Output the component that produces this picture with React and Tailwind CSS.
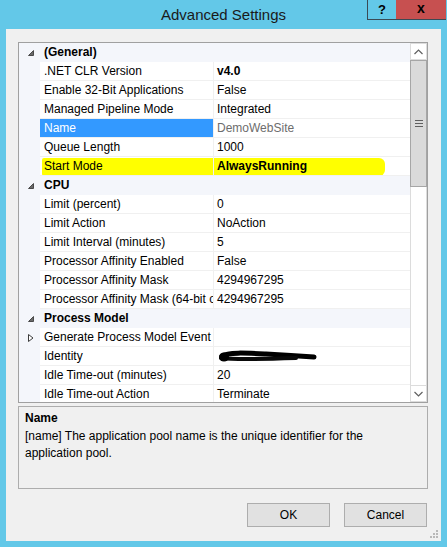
import React from 'react';

const rows = [
  { type: 'header', label: '(General)' },
  { label: '.NET CLR Version', value: 'v4.0', bold: true },
  { label: 'Enable 32-Bit Applications', value: 'False' },
  { label: 'Managed Pipeline Mode', value: 'Integrated' },
  { label: 'Name', value: 'DemoWebSite', selected: true },
  { label: 'Queue Length', value: '1000' },
  { label: 'Start Mode', value: 'AlwaysRunning', bold: true, marked: true },
  { type: 'header', label: 'CPU' },
  { label: 'Limit (percent)', value: '0' },
  { label: 'Limit Action', value: 'NoAction' },
  { label: 'Limit Interval (minutes)', value: '5' },
  { label: 'Processor Affinity Enabled', value: 'False' },
  { label: 'Processor Affinity Mask', value: '4294967295' },
  { label: 'Processor Affinity Mask (64-bit option)', value: '4294967295' },
  { type: 'header', label: 'Process Model' },
  { label: 'Generate Process Model Event Log Entry', value: '', collapsed: true },
  { label: 'Identity', value: '', scribble: true },
  { label: 'Idle Time-out (minutes)', value: '20' },
  { label: 'Idle Time-out Action', value: 'Terminate' },
];

const ExpandedIcon = () => (
  <svg width="6" height="6" viewBox="0 0 6 6">
    <polygon points="5.5,0.5 5.5,5.5 0.5,5.5" fill="#6a6a6a" stroke="#4a4a4a" strokeWidth="1" />
  </svg>
);

const CollapsedIcon = () => (
  <svg width="6" height="8" viewBox="0 0 6 8">
    <polygon points="0.5,0.5 5,4 0.5,7.5" fill="white" stroke="#3c3c3c" strokeWidth="1" />
  </svg>
);

// blacked-out identity value
const Scribble = () => (
  <svg width="104" height="16" viewBox="0 0 104 16" className="absolute left-[2px] top-[1px]">
    <path d="M6 8 C12 4, 30 5, 50 6 C70 7, 85 8, 98 9" stroke="#000" strokeWidth="5" fill="none" strokeLinecap="round" />
    <path d="M5 10 C20 12, 50 11, 80 10" stroke="#0a0a0a" strokeWidth="4" fill="none" strokeLinecap="round" />
    <ellipse cx="8" cy="9" rx="5" ry="4.5" fill="#000" />
  </svg>
);

const Row = ({ row }) => {
  if (row.type === 'header') {
    return (
      <div className="flex h-[19px] bg-[#f4f6fb]">
        <div className="w-[21px] flex items-center justify-end pr-[6px]">
          <ExpandedIcon />
        </div>
        <div className="pl-[4px] leading-[19px] font-bold">{row.label}</div>
      </div>
    );
  }
  return (
    <div className="flex h-[19px] relative">
      <div className="w-[21px] shrink-0 bg-[#f4f6fb] flex items-center justify-end pr-[6px]">
        {row.collapsed && <CollapsedIcon />}
      </div>
      {row.marked && (
        <div className="absolute left-[23px] top-[1px] w-[343px] h-[18px] bg-[#ffff00] rounded-r-[6px] rounded-l-[2px]" />
      )}
      <div
        className={
          'relative w-[174px] shrink-0 border-b border-r border-[#f0f0f0] pl-[4px] leading-[18px] whitespace-nowrap overflow-hidden ' +
          (row.selected ? 'bg-[#3399ff] text-white' : '')
        }
      >
        {row.label}
      </div>
      <div
        className={
          'relative flex-1 border-b border-[#f0f0f0] pl-[3px] leading-[18px] whitespace-nowrap overflow-hidden ' +
          (row.bold ? 'font-bold ' : '') +
          (row.selected ? 'text-[#6d6d6d]' : '')
        }
      >
        {row.value}
        {row.scribble && <Scribble />}
      </div>
    </div>
  );
};

const Scrollbar = () => (
  <div className="w-[17px] shrink-0 flex flex-col bg-white">
    <div className="h-[17px] border border-[#dcdcdc] flex items-center justify-center">
      <svg width="9" height="6" viewBox="0 0 9 6">
        <polyline points="0.5,5 4.5,1 8.5,5" fill="none" stroke="#606060" strokeWidth="1.2" />
      </svg>
    </div>
    <div className="h-[127px] bg-[#dadada] border border-[#a6a6a6] flex flex-col items-center justify-center gap-[2px]">
      <div className="w-[8px] h-[1px] bg-[#606060]" />
      <div className="w-[8px] h-[1px] bg-[#606060]" />
      <div className="w-[8px] h-[1px] bg-[#606060]" />
    </div>
    <div className="flex-1 border-x border-[#dcdcdc]" />
    <div className="h-[17px] border border-[#dcdcdc] flex items-center justify-center">
      <svg width="9" height="6" viewBox="0 0 9 6">
        <polyline points="0.5,1 4.5,5 8.5,1" fill="none" stroke="#606060" strokeWidth="1.2" />
      </svg>
    </div>
  </div>
);

const App = () => {
  return (
    <div
      className="w-[447px] h-[547px] bg-[#63c8e8] text-[12px] text-black overflow-hidden"
      style={{ fontFamily: '"Liberation Sans", Arial, sans-serif' }}
    >
      {/* title bar */}
      <div className="relative h-[29px] flex items-center justify-center">
        <span className="text-[15px] text-[#1a1a1a] pt-[1px]">Advanced Settings</span>
        <div className="absolute top-0 right-[1px] flex h-[20px]">
          <div className="w-[29px] border-l border-b border-[#3a4a55] flex items-center justify-center font-bold text-[13px]">
            ?
          </div>
          <div className="w-[50px] bg-[#c75050] border-b border-[#3a4a55] flex items-center justify-center font-bold text-[14px] text-black pb-[2px]">
            x
          </div>
        </div>
      </div>

      {/* client area */}
      <div className="mx-[6px] h-[512px] bg-[#f0f0f0] pt-[13px] pl-[12px] pr-[13px] flex flex-col relative">
        <div className="h-[361px] border border-[#a0a0a0] bg-white flex">
          <div className="flex-1 overflow-hidden">
            {rows.map((row, i) => (
              <Row key={i} row={row} />
            ))}
          </div>
          <Scrollbar />
        </div>

        <div className="mt-[3px] h-[83px] border border-[#adadad] px-[6px] pt-[3px]">
          <div className="font-bold leading-[16px]">Name</div>
          <div className="leading-[17px] mt-[2px]">
            [name] The application pool name is the unique identifier for the
            <br />
            application pool.
          </div>
        </div>

        <div className="mt-[14px] flex justify-end gap-[14px] pr-[1px]">
          <button className="w-[83px] h-[24px] bg-[#e1e1e1] border border-[#adadad] text-[12px]">OK</button>
          <button className="w-[83px] h-[24px] bg-[#e1e1e1] border border-[#adadad] text-[12px]">Cancel</button>
        </div>

        {/* size grip */}
        <svg width="10" height="10" viewBox="0 0 10 10" className="absolute right-[2px] bottom-[2px]">
          <rect x="7" y="1" width="2" height="2" fill="#b8b8b8" />
          <rect x="4" y="4" width="2" height="2" fill="#b8b8b8" />
          <rect x="7" y="4" width="2" height="2" fill="#b8b8b8" />
          <rect x="1" y="7" width="2" height="2" fill="#b8b8b8" />
          <rect x="4" y="7" width="2" height="2" fill="#b8b8b8" />
          <rect x="7" y="7" width="2" height="2" fill="#b8b8b8" />
        </svg>
      </div>
    </div>
  );
};

export default App;
